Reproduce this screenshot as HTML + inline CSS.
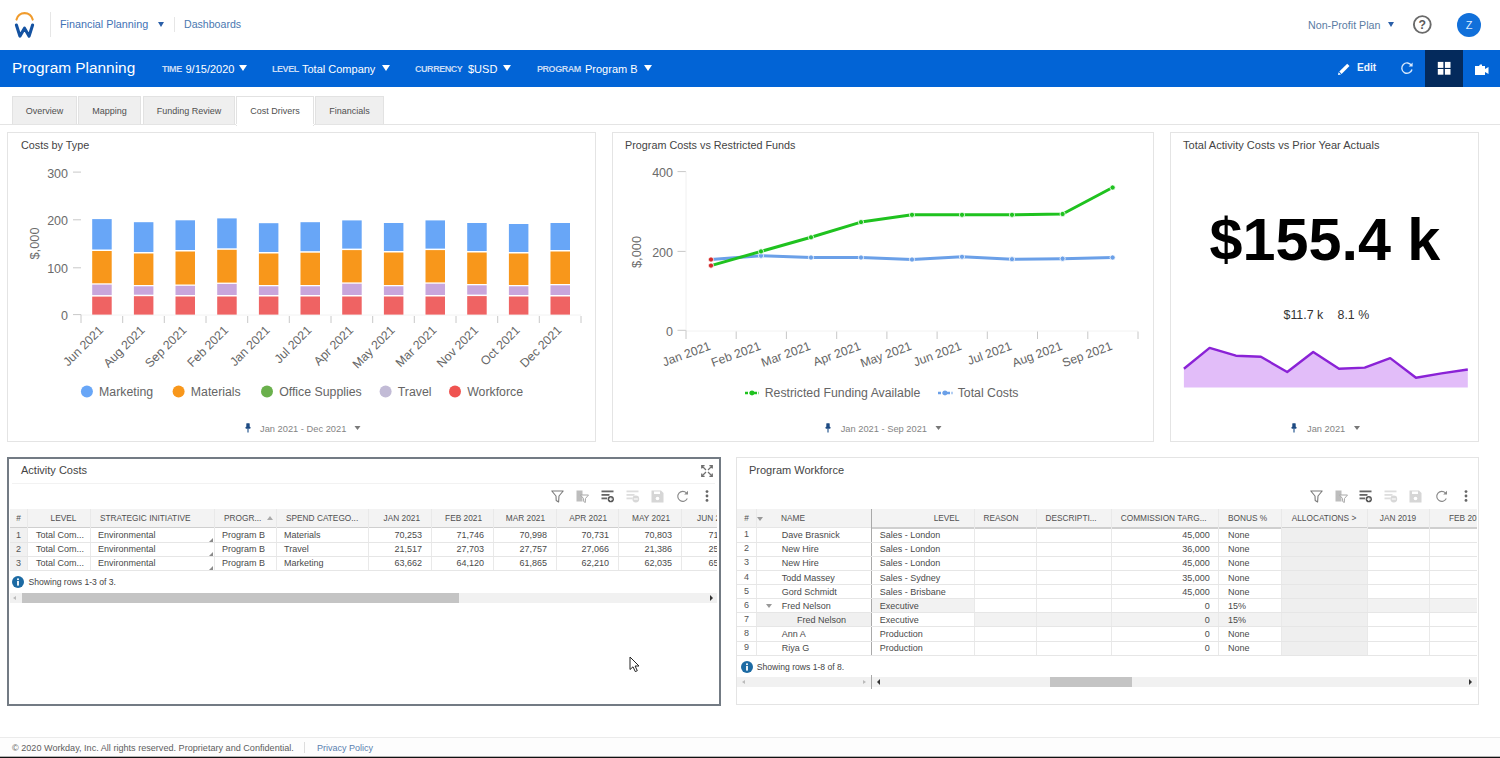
<!DOCTYPE html>
<html><head><meta charset="utf-8">
<style>
*{box-sizing:border-box;margin:0;padding:0}
html,body{width:1500px;height:758px;overflow:hidden;background:#fff;font-family:"Liberation Sans",sans-serif;color:#333}
.a{position:absolute;white-space:nowrap}
#top{position:absolute;left:0;top:0;width:1500px;height:49px;background:#fff}
#bar{position:absolute;left:0;top:50px;width:1500px;height:37px;background:#0264d6}
.lbl{font-size:9px;font-weight:bold;color:#c9dbf4;letter-spacing:-0.45px}
.val{font-size:11px;color:#fff}
.tri{width:0;height:0;border-left:4px solid transparent;border-right:4px solid transparent;border-top:6px solid #fff}
.tab{position:absolute;top:96px;height:29px;background:#efefef;border:1px solid #e2e2e2;border-bottom:none;font-size:9px;color:#505050;text-align:center;line-height:28px}
.panel{position:absolute;border:1px solid #e4e4e4;background:#fff}
.ptitle{position:absolute;font-size:10.8px;color:#444;white-space:nowrap}
</style></head><body>
<div id="top">
  <!-- logo -->
  <svg class="a" style="left:0;top:0" width="46" height="46" viewBox="0 0 46 46">
    <path d="M16.5 19.6 A8.3 8.3 0 0 1 32.7 19.6" fill="none" stroke="#f09b2c" stroke-width="2.1" stroke-linecap="round"/>
    <path d="M16.4 25 L19.9 36.1 L24.5 28.2 L29.1 36.1 L32.6 25" fill="none" stroke="#1452a1" stroke-width="3.1" stroke-linecap="round" stroke-linejoin="round"/>
  </svg>
  <div class="a" style="left:50px;top:12px;width:1px;height:25px;background:#e6e6e6"></div>
  <div class="a" style="left:60px;top:17.8px;font-size:10.8px;color:#3f72b5">Financial Planning</div>
  <div class="a tri" style="left:158px;top:22px;border-top-color:#2a5fa8;border-left-width:3.5px;border-right-width:3.5px;border-top-width:5px"></div>
  <div class="a" style="left:174px;top:17px;width:1px;height:15px;background:#e6e6e6"></div>
  <div class="a" style="left:184px;top:17.8px;font-size:10.6px;color:#4b78b0">Dashboards</div>
  <div class="a" style="left:1308px;top:18.5px;font-size:10.7px;color:#5a7ca3">Non-Profit Plan</div>
  <div class="a tri" style="left:1388px;top:22px;border-top-color:#2a5fa8;border-left-width:3.5px;border-right-width:3.5px;border-top-width:5px"></div>
  <svg class="a" style="left:1405px;top:8px" width="35" height="34" viewBox="1405 8 35 34"><circle cx="1422.3" cy="24.5" r="8.4" fill="none" stroke="#6a6a6a" stroke-width="1.9"/><text x="1422.2" y="29" text-anchor="middle" font-size="12.3" font-weight="bold" fill="#5a5a5a" font-family="Liberation Sans, sans-serif">?</text></svg>
  <div class="a" style="left:1457px;top:12.5px;width:24px;height:24px;background:#1170da;border-radius:50%;font-size:11px;color:#dfeeff;text-align:center;line-height:24px">Z</div>
</div>
<div id="bar">
  <div class="a" style="left:12px;top:9px;font-size:15.4px;color:#fff">Program Planning</div>
  <div class="a lbl" style="left:162px;top:13.5px">TIME</div>
  <div class="a val" style="left:185.5px;top:12.5px">9/15/2020</div>
  <div class="a tri" style="left:239px;top:15px"></div>
  <div class="a lbl" style="left:272px;top:13.5px">LEVEL</div>
  <div class="a val" style="left:302px;top:12.5px">Total Company</div>
  <div class="a tri" style="left:382px;top:15px"></div>
  <div class="a lbl" style="left:415px;top:13.5px">CURRENCY</div>
  <div class="a val" style="left:468px;top:12.5px">$USD</div>
  <div class="a tri" style="left:503px;top:15px"></div>
  <div class="a lbl" style="left:537px;top:13.5px">PROGRAM</div>
  <div class="a val" style="left:585px;top:12.5px">Program B</div>
  <div class="a tri" style="left:644px;top:15px"></div>
  <!-- edit -->
  <svg class="a" style="left:1337px;top:11.5px" width="14" height="14" viewBox="0 0 14 14"><path d="M1 13 L1.6 10.2 L4 12.4 Z" fill="#fff"/><path d="M2.3 9.6 L10.2 1.7 L12.5 4 L4.6 11.9 Z" fill="#fff"/></svg>
  <div class="a" style="left:1357px;top:12px;font-size:10.2px;font-weight:bold;color:#eef5ff">Edit</div>
  <svg class="a" style="left:1400px;top:11px" width="14" height="14" viewBox="0 0 14 14"><path d="M11.5 4.5 A5.2 5.2 0 1 0 12 8.5" fill="none" stroke="#d8e8fb" stroke-width="1.4"/><path d="M12.6 1.6 L12.6 5.6 L8.6 5.6 Z" fill="#d8e8fb"/></svg>
  <div class="a" style="left:1425px;top:0;width:38px;height:37px;background:#042a5c"></div>
  <svg class="a" style="left:1425px;top:0" width="38" height="37" viewBox="1425 50 38 37"><rect x="1437.8" y="61.9" width="5.6" height="6" fill="#fff"/><rect x="1444.9" y="61.9" width="5.6" height="6" fill="#fff"/><rect x="1437.8" y="69" width="5.6" height="5.7" fill="#fff"/><rect x="1444.9" y="69" width="5.6" height="5.7" fill="#fff"/></svg>
  <svg class="a" style="left:1474px;top:12.5px" width="16" height="14" viewBox="0 0 16 14"><path d="M1 3 L5 3 L6 1.5 L8 1.5 L8 3 L11 3 L11 6 L14.5 4 L14.5 11 L11 9 L11 12 L1 12 Z" fill="#fff"/></svg>
</div>
<!-- tabs -->
<div class="tab" style="left:12px;width:65px">Overview</div>
<div class="tab" style="left:78px;width:63px">Mapping</div>
<div class="tab" style="left:143px;width:92px">Funding Review</div>
<div class="tab" style="left:236px;width:78px;background:#fff;height:30px">Cost Drivers</div>
<div class="tab" style="left:315px;width:69px">Financials</div>
<div class="a" style="left:0;top:124px;width:1500px;height:1px;background:#e4e4e4"></div>
<div class="a" style="left:236px;top:124px;width:78px;height:1px;background:#fff"></div>

<!-- panels -->
<div class="panel" style="left:7px;top:132px;width:589px;height:310px"></div>
<div class="panel" style="left:612px;top:132px;width:542px;height:310px"></div>
<div class="panel" style="left:1170px;top:132px;width:309px;height:310px"></div>
<div class="panel" style="left:7px;top:457px;width:714px;height:249px;border:2px solid #737b84"></div>
<div class="panel" style="left:736px;top:457px;width:743px;height:248px"></div>

<div class="ptitle" style="left:21px;top:139px">Costs by Type</div>
<div class="ptitle" style="left:625px;top:139px">Program Costs vs Restricted Funds</div>
<div class="ptitle" style="left:1183px;top:139px;font-size:11.05px">Total Activity Costs vs Prior Year Actuals</div>
<div class="ptitle" style="left:21px;top:464px;font-size:11px">Activity Costs</div>
<div class="ptitle" style="left:749px;top:464px;font-size:11px">Program Workforce</div>

<!-- CHARTS -->
<div id="charts"><svg class="a" style="left:0;top:0" width="600" height="445" viewBox="0 0 600 445">
<text x="68" y="177.6" text-anchor="end" font-size="12.5" fill="#6b6b6b" font-family="Liberation Sans, sans-serif">300</text>
<line x1="73" y1="172.1" x2="81" y2="172.1" stroke="#c8c8c8" stroke-width="1"/>
<text x="68" y="225.3" text-anchor="end" font-size="12.5" fill="#6b6b6b" font-family="Liberation Sans, sans-serif">200</text>
<line x1="73" y1="219.8" x2="81" y2="219.8" stroke="#c8c8c8" stroke-width="1"/>
<text x="68" y="273.3" text-anchor="end" font-size="12.5" fill="#6b6b6b" font-family="Liberation Sans, sans-serif">100</text>
<line x1="73" y1="267.8" x2="81" y2="267.8" stroke="#c8c8c8" stroke-width="1"/>
<text x="68" y="320.1" text-anchor="end" font-size="12.5" fill="#6b6b6b" font-family="Liberation Sans, sans-serif">0</text>
<line x1="73" y1="314.6" x2="81" y2="314.6" stroke="#c8c8c8" stroke-width="1"/>
<text transform="translate(38.6,243.5) rotate(-90)" text-anchor="middle" font-size="12.8" fill="#6b6b6b" font-family="Liberation Sans, sans-serif">$,000</text>
<line x1="81" y1="315" x2="581" y2="315" stroke="#f2f2f2" stroke-width="1"/>
<line x1="81.0" y1="314.6" x2="81.0" y2="323" stroke="#c8c8c8" stroke-width="1"/>
<line x1="122.7" y1="316" x2="122.7" y2="323" stroke="#c8c8c8" stroke-width="1"/>
<line x1="164.3" y1="316" x2="164.3" y2="323" stroke="#c8c8c8" stroke-width="1"/>
<line x1="206.0" y1="316" x2="206.0" y2="323" stroke="#c8c8c8" stroke-width="1"/>
<line x1="247.7" y1="316" x2="247.7" y2="323" stroke="#c8c8c8" stroke-width="1"/>
<line x1="289.3" y1="316" x2="289.3" y2="323" stroke="#c8c8c8" stroke-width="1"/>
<line x1="331.0" y1="316" x2="331.0" y2="323" stroke="#c8c8c8" stroke-width="1"/>
<line x1="372.7" y1="316" x2="372.7" y2="323" stroke="#c8c8c8" stroke-width="1"/>
<line x1="414.3" y1="316" x2="414.3" y2="323" stroke="#c8c8c8" stroke-width="1"/>
<line x1="456.0" y1="316" x2="456.0" y2="323" stroke="#c8c8c8" stroke-width="1"/>
<line x1="497.7" y1="316" x2="497.7" y2="323" stroke="#c8c8c8" stroke-width="1"/>
<line x1="539.3" y1="316" x2="539.3" y2="323" stroke="#c8c8c8" stroke-width="1"/>
<line x1="581.0" y1="316" x2="581.0" y2="323" stroke="#c8c8c8" stroke-width="1"/>
<rect x="92.2" y="219.1" width="19.5" height="30.4" fill="#68a6f7"/>
<rect x="92.2" y="251.0" width="19.5" height="32.3" fill="#f8971b"/>
<rect x="92.2" y="284.6" width="19.5" height="10.5" fill="#c8a6dc"/>
<rect x="92.2" y="296.6" width="19.5" height="18.0" fill="#ef6363"/>
<text transform="translate(104.0,331) rotate(-45)" text-anchor="end" font-size="12.3" fill="#666" font-family="Liberation Sans, sans-serif">Jun 2021</text>
<rect x="133.9" y="222.2" width="19.5" height="29.8" fill="#68a6f7"/>
<rect x="133.9" y="253.5" width="19.5" height="31.5" fill="#f8971b"/>
<rect x="133.9" y="286.3" width="19.5" height="8.4" fill="#c8a6dc"/>
<rect x="133.9" y="296.2" width="19.5" height="18.4" fill="#ef6363"/>
<text transform="translate(145.7,331) rotate(-45)" text-anchor="end" font-size="12.3" fill="#666" font-family="Liberation Sans, sans-serif">Aug 2021</text>
<rect x="175.5" y="220.3" width="19.5" height="29.7" fill="#68a6f7"/>
<rect x="175.5" y="251.5" width="19.5" height="33.0" fill="#f8971b"/>
<rect x="175.5" y="285.8" width="19.5" height="9.2" fill="#c8a6dc"/>
<rect x="175.5" y="296.5" width="19.5" height="18.1" fill="#ef6363"/>
<text transform="translate(187.3,331) rotate(-45)" text-anchor="end" font-size="12.3" fill="#666" font-family="Liberation Sans, sans-serif">Sep 2021</text>
<rect x="217.2" y="218.4" width="19.5" height="29.9" fill="#68a6f7"/>
<rect x="217.2" y="249.8" width="19.5" height="32.8" fill="#f8971b"/>
<rect x="217.2" y="283.90000000000003" width="19.5" height="11.1" fill="#c8a6dc"/>
<rect x="217.2" y="296.5" width="19.5" height="18.1" fill="#ef6363"/>
<text transform="translate(229.0,331) rotate(-45)" text-anchor="end" font-size="12.3" fill="#666" font-family="Liberation Sans, sans-serif">Feb 2021</text>
<rect x="258.9" y="223.2" width="19.5" height="28.8" fill="#68a6f7"/>
<rect x="258.9" y="253.5" width="19.5" height="31.5" fill="#f8971b"/>
<rect x="258.9" y="286.3" width="19.5" height="8.7" fill="#c8a6dc"/>
<rect x="258.9" y="296.5" width="19.5" height="18.1" fill="#ef6363"/>
<text transform="translate(270.7,331) rotate(-45)" text-anchor="end" font-size="12.3" fill="#666" font-family="Liberation Sans, sans-serif">Jan 2021</text>
<rect x="300.5" y="222.2" width="19.5" height="29.0" fill="#68a6f7"/>
<rect x="300.5" y="252.7" width="19.5" height="32.3" fill="#f8971b"/>
<rect x="300.5" y="286.3" width="19.5" height="8.7" fill="#c8a6dc"/>
<rect x="300.5" y="296.5" width="19.5" height="18.1" fill="#ef6363"/>
<text transform="translate(312.3,331) rotate(-45)" text-anchor="end" font-size="12.3" fill="#666" font-family="Liberation Sans, sans-serif">Jul 2021</text>
<rect x="342.2" y="220.4" width="19.5" height="28.2" fill="#68a6f7"/>
<rect x="342.2" y="250.1" width="19.5" height="32.3" fill="#f8971b"/>
<rect x="342.2" y="283.7" width="19.5" height="11.3" fill="#c8a6dc"/>
<rect x="342.2" y="296.5" width="19.5" height="18.1" fill="#ef6363"/>
<text transform="translate(354.0,331) rotate(-45)" text-anchor="end" font-size="12.3" fill="#666" font-family="Liberation Sans, sans-serif">Apr 2021</text>
<rect x="383.9" y="223" width="19.5" height="28.0" fill="#68a6f7"/>
<rect x="383.9" y="252.5" width="19.5" height="32.5" fill="#f8971b"/>
<rect x="383.9" y="286.3" width="19.5" height="8.7" fill="#c8a6dc"/>
<rect x="383.9" y="296.5" width="19.5" height="18.1" fill="#ef6363"/>
<text transform="translate(395.7,331) rotate(-45)" text-anchor="end" font-size="12.3" fill="#666" font-family="Liberation Sans, sans-serif">May 2021</text>
<rect x="425.5" y="220.4" width="19.5" height="28.2" fill="#68a6f7"/>
<rect x="425.5" y="250.1" width="19.5" height="32.3" fill="#f8971b"/>
<rect x="425.5" y="283.7" width="19.5" height="11.3" fill="#c8a6dc"/>
<rect x="425.5" y="296.5" width="19.5" height="18.1" fill="#ef6363"/>
<text transform="translate(437.3,331) rotate(-45)" text-anchor="end" font-size="12.3" fill="#666" font-family="Liberation Sans, sans-serif">Mar 2021</text>
<rect x="467.2" y="223" width="19.5" height="28.0" fill="#68a6f7"/>
<rect x="467.2" y="252.5" width="19.5" height="31.5" fill="#f8971b"/>
<rect x="467.2" y="285.3" width="19.5" height="9.3" fill="#c8a6dc"/>
<rect x="467.2" y="296.1" width="19.5" height="18.5" fill="#ef6363"/>
<text transform="translate(479.0,331) rotate(-45)" text-anchor="end" font-size="12.3" fill="#666" font-family="Liberation Sans, sans-serif">Nov 2021</text>
<rect x="508.9" y="224" width="19.5" height="28.0" fill="#68a6f7"/>
<rect x="508.9" y="253.5" width="19.5" height="31.5" fill="#f8971b"/>
<rect x="508.9" y="286.3" width="19.5" height="8.7" fill="#c8a6dc"/>
<rect x="508.9" y="296.5" width="19.5" height="18.1" fill="#ef6363"/>
<text transform="translate(520.7,331) rotate(-45)" text-anchor="end" font-size="12.3" fill="#666" font-family="Liberation Sans, sans-serif">Oct 2021</text>
<rect x="550.5" y="223" width="19.5" height="27.0" fill="#68a6f7"/>
<rect x="550.5" y="251.5" width="19.5" height="32.5" fill="#f8971b"/>
<rect x="550.5" y="285.3" width="19.5" height="9.7" fill="#c8a6dc"/>
<rect x="550.5" y="296.5" width="19.5" height="18.1" fill="#ef6363"/>
<text transform="translate(562.3,331) rotate(-45)" text-anchor="end" font-size="12.3" fill="#666" font-family="Liberation Sans, sans-serif">Dec 2021</text>
<circle cx="86.9" cy="391.6" r="6" fill="#68a6f7"/>
<text x="99.1" y="396" font-size="12.3" fill="#656565" font-family="Liberation Sans, sans-serif">Marketing</text>
<circle cx="178.6" cy="391.6" r="6" fill="#f8971b"/>
<text x="190.8" y="396" font-size="12.3" fill="#656565" font-family="Liberation Sans, sans-serif">Materials</text>
<circle cx="267" cy="391.6" r="6" fill="#6ab04c"/>
<text x="279.2" y="396" font-size="12.3" fill="#656565" font-family="Liberation Sans, sans-serif">Office Supplies</text>
<circle cx="385.6" cy="391.6" r="6" fill="#c2bbd6"/>
<text x="397.8" y="396" font-size="12.3" fill="#656565" font-family="Liberation Sans, sans-serif">Travel</text>
<circle cx="455" cy="391.6" r="6" fill="#ef5350"/>
<text x="467.2" y="396" font-size="12.3" fill="#656565" font-family="Liberation Sans, sans-serif">Workforce</text>
<g transform="translate(248,428)"><rect x="-1.7" y="-4.8" width="3.4" height="4.4" rx="0.6" fill="#1d4a82"/><rect x="-2.6" y="-1.2" width="5.2" height="2" rx="1" fill="#1d4a82"/><line x1="0" y1="0.5" x2="0" y2="4.5" stroke="#2a5a92" stroke-width="1.2"/></g>
<text x="260" y="431.6" font-size="9.3" fill="#848484" font-family="Liberation Sans, sans-serif">Jan 2021 - Dec 2021</text>
<path d="M354.5 426 L360.5 426 L357.5 430 Z" fill="#7a7a7a"/>
</svg>
<svg class="a" style="left:600px;top:0" width="560" height="445" viewBox="600 0 560 445">
<text x="673" y="177.1" text-anchor="end" font-size="12.5" fill="#6b6b6b" font-family="Liberation Sans, sans-serif">400</text>
<line x1="677.5" y1="171.6" x2="686" y2="171.6" stroke="#c8c8c8" stroke-width="1"/>
<text x="673" y="256.9" text-anchor="end" font-size="12.5" fill="#6b6b6b" font-family="Liberation Sans, sans-serif">200</text>
<line x1="677.5" y1="251.4" x2="686" y2="251.4" stroke="#c8c8c8" stroke-width="1"/>
<text x="673" y="335.8" text-anchor="end" font-size="12.5" fill="#6b6b6b" font-family="Liberation Sans, sans-serif">0</text>
<line x1="677.5" y1="330.3" x2="686" y2="330.3" stroke="#c8c8c8" stroke-width="1"/>
<line x1="686" y1="171.6" x2="686" y2="330.3" stroke="#f0f0f0" stroke-width="1"/>
<text transform="translate(641.2,252) rotate(-90)" text-anchor="middle" font-size="12.8" fill="#6b6b6b" font-family="Liberation Sans, sans-serif">$,000</text>
<line x1="686" y1="331" x2="1138" y2="331" stroke="#f2f2f2" stroke-width="1"/>
<line x1="686.0" y1="330.3" x2="686.0" y2="339" stroke="#c8c8c8" stroke-width="1"/>
<line x1="736.2" y1="331.5" x2="736.2" y2="339" stroke="#c8c8c8" stroke-width="1"/>
<line x1="786.4" y1="331.5" x2="786.4" y2="339" stroke="#c8c8c8" stroke-width="1"/>
<line x1="836.7" y1="331.5" x2="836.7" y2="339" stroke="#c8c8c8" stroke-width="1"/>
<line x1="886.9" y1="331.5" x2="886.9" y2="339" stroke="#c8c8c8" stroke-width="1"/>
<line x1="937.1" y1="331.5" x2="937.1" y2="339" stroke="#c8c8c8" stroke-width="1"/>
<line x1="987.3" y1="331.5" x2="987.3" y2="339" stroke="#c8c8c8" stroke-width="1"/>
<line x1="1037.5" y1="331.5" x2="1037.5" y2="339" stroke="#c8c8c8" stroke-width="1"/>
<line x1="1087.8" y1="331.5" x2="1087.8" y2="339" stroke="#c8c8c8" stroke-width="1"/>
<line x1="1138.0" y1="331.5" x2="1138.0" y2="339" stroke="#c8c8c8" stroke-width="1"/>
<polyline points="711,259.5 761,255.8 811,257.5 861,257.5 912,259.5 962,256.8 1012,259.2 1062.6,258.7 1112.6,257.5" fill="none" stroke="#6ba0e8" stroke-width="3" stroke-linejoin="round"/>
<polyline points="711,265.6 761,251.4 811,237.3 861,222.1 912,214.8 962,214.8 1012,214.8 1062.6,214 1112.6,187.5" fill="none" stroke="#1fc21f" stroke-width="3" stroke-linejoin="round"/>
<circle cx="711" cy="259.5" r="2.6" fill="#d42a2a" stroke="#fff" stroke-width="0.8"/>
<circle cx="761" cy="255.8" r="2.6" fill="#6ba0e8" stroke="#fff" stroke-width="0.8"/>
<circle cx="811" cy="257.5" r="2.6" fill="#6ba0e8" stroke="#fff" stroke-width="0.8"/>
<circle cx="861" cy="257.5" r="2.6" fill="#6ba0e8" stroke="#fff" stroke-width="0.8"/>
<circle cx="912" cy="259.5" r="2.6" fill="#6ba0e8" stroke="#fff" stroke-width="0.8"/>
<circle cx="962" cy="256.8" r="2.6" fill="#6ba0e8" stroke="#fff" stroke-width="0.8"/>
<circle cx="1012" cy="259.2" r="2.6" fill="#6ba0e8" stroke="#fff" stroke-width="0.8"/>
<circle cx="1062.6" cy="258.7" r="2.6" fill="#6ba0e8" stroke="#fff" stroke-width="0.8"/>
<circle cx="1112.6" cy="257.5" r="2.6" fill="#6ba0e8" stroke="#fff" stroke-width="0.8"/>
<circle cx="711" cy="265.6" r="2.6" fill="#d42a2a" stroke="#fff" stroke-width="0.8"/>
<circle cx="761" cy="251.4" r="2.6" fill="#1fc21f" stroke="#fff" stroke-width="0.8"/>
<circle cx="811" cy="237.3" r="2.6" fill="#1fc21f" stroke="#fff" stroke-width="0.8"/>
<circle cx="861" cy="222.1" r="2.6" fill="#1fc21f" stroke="#fff" stroke-width="0.8"/>
<circle cx="912" cy="214.8" r="2.6" fill="#1fc21f" stroke="#fff" stroke-width="0.8"/>
<circle cx="962" cy="214.8" r="2.6" fill="#1fc21f" stroke="#fff" stroke-width="0.8"/>
<circle cx="1012" cy="214.8" r="2.6" fill="#1fc21f" stroke="#fff" stroke-width="0.8"/>
<circle cx="1062.6" cy="214" r="2.6" fill="#1fc21f" stroke="#fff" stroke-width="0.8"/>
<circle cx="1112.6" cy="187.5" r="2.6" fill="#1fc21f" stroke="#fff" stroke-width="0.8"/>
<text transform="translate(711.5,349.3) rotate(-20)" text-anchor="end" font-size="12.2" fill="#666" font-family="Liberation Sans, sans-serif">Jan 2021</text>
<text transform="translate(761.5,349.3) rotate(-20)" text-anchor="end" font-size="12.2" fill="#666" font-family="Liberation Sans, sans-serif">Feb 2021</text>
<text transform="translate(811.5,349.3) rotate(-20)" text-anchor="end" font-size="12.2" fill="#666" font-family="Liberation Sans, sans-serif">Mar 2021</text>
<text transform="translate(861.5,349.3) rotate(-20)" text-anchor="end" font-size="12.2" fill="#666" font-family="Liberation Sans, sans-serif">Apr 2021</text>
<text transform="translate(912.5,349.3) rotate(-20)" text-anchor="end" font-size="12.2" fill="#666" font-family="Liberation Sans, sans-serif">May 2021</text>
<text transform="translate(962.5,349.3) rotate(-20)" text-anchor="end" font-size="12.2" fill="#666" font-family="Liberation Sans, sans-serif">Jun 2021</text>
<text transform="translate(1012.5,349.3) rotate(-20)" text-anchor="end" font-size="12.2" fill="#666" font-family="Liberation Sans, sans-serif">Jul 2021</text>
<text transform="translate(1063.1,349.3) rotate(-20)" text-anchor="end" font-size="12.2" fill="#666" font-family="Liberation Sans, sans-serif">Aug 2021</text>
<text transform="translate(1113.1,349.3) rotate(-20)" text-anchor="end" font-size="12.2" fill="#666" font-family="Liberation Sans, sans-serif">Sep 2021</text>
<line x1="745" y1="393" x2="759" y2="393" stroke="#1fc21f" stroke-width="2.5" stroke-dasharray="3,1.5"/><circle cx="752" cy="393" r="2.4" fill="#1fc21f"/>
<text x="764.7" y="397.3" font-size="12.3" fill="#656565" font-family="Liberation Sans, sans-serif">Restricted Funding Available</text>
<line x1="938" y1="393" x2="952.5" y2="393" stroke="#6ba0e8" stroke-width="2.5" stroke-dasharray="3,1.5"/><circle cx="945" cy="393" r="2.4" fill="#6ba0e8"/>
<text x="957.7" y="397.3" font-size="12.3" fill="#656565" font-family="Liberation Sans, sans-serif">Total Costs</text>
<g transform="translate(828,428)"><rect x="-1.7" y="-4.8" width="3.4" height="4.4" rx="0.6" fill="#1d4a82"/><rect x="-2.6" y="-1.2" width="5.2" height="2" rx="1" fill="#1d4a82"/><line x1="0" y1="0.5" x2="0" y2="4.5" stroke="#2a5a92" stroke-width="1.2"/></g>
<text x="840.7" y="431.6" font-size="9.3" fill="#848484" font-family="Liberation Sans, sans-serif">Jan 2021 - Sep 2021</text>
<path d="M935.5 426 L941.5 426 L938.5 430 Z" fill="#777"/>
</svg>
<svg class="a" style="left:1160px;top:0" width="340" height="445" viewBox="1160 0 340 445">
<text x="1209.5" y="259.5" font-size="59.3" font-weight="bold" fill="#000" font-family="Liberation Sans, sans-serif">$155.4 k</text>
<text x="1283.5" y="318.5" font-size="12.4" fill="#333" font-family="Liberation Sans, sans-serif">$11.7 k</text>
<text x="1337.5" y="318.5" font-size="12.4" fill="#333" font-family="Liberation Sans, sans-serif">8.1 %</text>
<polygon points="1183.9,387.5 1183.9,368.7 1209.6,347.9 1235.9,355.7 1260.9,356.8 1287.2,372 1313.2,352 1339,368.7 1364.7,367.6 1390.2,358.1 1416,377.8 1441.5,373.4 1467.8,369.5 1467.8,387.5" fill="#e2bdf9"/>
<polyline points="1183.9,368.7 1209.6,347.9 1235.9,355.7 1260.9,356.8 1287.2,372 1313.2,352 1339,368.7 1364.7,367.6 1390.2,358.1 1416,377.8 1441.5,373.4 1467.8,369.5" fill="none" stroke="#8a22d6" stroke-width="2.4" stroke-linejoin="round"/>
<g transform="translate(1294,428)"><rect x="-1.7" y="-4.8" width="3.4" height="4.4" rx="0.6" fill="#1d4a82"/><rect x="-2.6" y="-1.2" width="5.2" height="2" rx="1" fill="#1d4a82"/><line x1="0" y1="0.5" x2="0" y2="4.5" stroke="#2a5a92" stroke-width="1.2"/></g>
<text x="1307" y="431.6" font-size="9.3" fill="#848484" font-family="Liberation Sans, sans-serif">Jan 2021</text>
<path d="M1354 426 L1360 426 L1357 430 Z" fill="#777"/>
</svg></div><!--/charts-->
<!-- TABLES -->
<div id="tables"><div class="a" style="left:0;top:0;width:717px;height:758px;overflow:hidden">
<div class="a" style="left:12px;top:483px;width:703px;height:1px;background:#f2f2f2"></div>
<svg class="a" style="left:701px;top:465px" width="12" height="12" viewBox="0 0 12 12"><path d="M0.7 3.6 V0.7 H3.6 M8.4 0.7 H11.3 V3.6 M11.3 8.4 V11.3 H8.4 M3.6 11.3 H0.7 V8.4 M1 1 L5 5 M11 1 L7 5 M11 11 L7 7 M1 11 L5 7" fill="none" stroke="#6f6f6f" stroke-width="1.2"/></svg>
<svg class="a" style="left:550.5px;top:490px" width="13" height="13" viewBox="0 0 13 13"><path d="M0.8 1 L12.2 1 L8 6 L7.6 12 L5.2 10.5 L5 6 Z" fill="none" stroke="#7a7a7a" stroke-width="1.1" stroke-linejoin="round"/></svg>
<svg class="a" style="left:575.5px;top:490px" width="13" height="13" viewBox="0 0 13 13"><rect x="0.5" y="0.5" width="6" height="11" fill="#bdbdbd"/><path d="M4.5 5 L12.5 5 L9.5 8.5 L9.3 12.5 L7.7 11.5 L7.5 8.5 Z" fill="#fff" stroke="#a8a8a8" stroke-width="1"/></svg>
<svg class="a" style="left:600.5px;top:490px" width="14" height="13" viewBox="0 0 14 13"><rect x="0.5" y="0.5" width="12" height="1.8" fill="#666"/><rect x="0.5" y="4" width="8" height="1.8" fill="#666"/><rect x="0.5" y="7.5" width="6" height="1.8" fill="#666"/><circle cx="9.8" cy="9.2" r="3.6" fill="#fff"/><circle cx="9.8" cy="9.2" r="3.1" fill="#555"/><path d="M9.8 7.4 V11 M8 9.2 H11.6" stroke="#fff" stroke-width="1.2"/></svg>
<svg class="a" style="left:625.5px;top:490px" width="14" height="13" viewBox="0 0 14 13"><rect x="0.5" y="0.5" width="12" height="1.8" fill="#ddd"/><rect x="0.5" y="4" width="8" height="1.8" fill="#ddd"/><rect x="0.5" y="7.5" width="6" height="1.8" fill="#ddd"/><circle cx="9.8" cy="9" r="3.4" fill="#d8d8d8"/><path d="M7.8 9 H11.8" stroke="#fff" stroke-width="1.1"/></svg>
<svg class="a" style="left:651px;top:490px" width="13" height="13" viewBox="0 0 13 13"><path d="M0.5 0.5 H10 L12.5 3 V12.5 H0.5 Z" fill="#d6d6d6"/><rect x="3" y="1.5" width="6" height="2.5" fill="#fff"/><circle cx="6.5" cy="8.5" r="1.8" fill="#fff"/></svg>
<svg class="a" style="left:676px;top:490px" width="13" height="13" viewBox="0 0 13 13"><path d="M10.5 3 A5 5 0 1 0 11.3 8.5" fill="none" stroke="#8a8a8a" stroke-width="1.1"/><path d="M12 0.8 L12 4.6 L8.2 4.6 Z" fill="#8a8a8a"/></svg>
<svg class="a" style="left:705px;top:490px" width="4" height="12" viewBox="0 0 4 12"><circle cx="2" cy="1.6" r="1.4" fill="#666"/><circle cx="2" cy="6" r="1.4" fill="#666"/><circle cx="2" cy="10.4" r="1.4" fill="#666"/></svg>
<div class="a" style="left:10px;top:509px;width:707px;height:19px;background:#f3f3f3;border-bottom:1.5px solid #cfcfcf"></div>
<div class="a" style="left:27px;top:509px;width:1px;height:61px;background:#e9e9e9"></div>
<div class="a" style="left:90px;top:509px;width:1px;height:61px;background:#e9e9e9"></div>
<div class="a" style="left:214px;top:509px;width:1px;height:61px;background:#e9e9e9"></div>
<div class="a" style="left:276px;top:509px;width:1px;height:61px;background:#e9e9e9"></div>
<div class="a" style="left:368px;top:509px;width:1px;height:61px;background:#e9e9e9"></div>
<div class="a" style="left:431px;top:509px;width:1px;height:61px;background:#e9e9e9"></div>
<div class="a" style="left:493px;top:509px;width:1px;height:61px;background:#e9e9e9"></div>
<div class="a" style="left:556px;top:509px;width:1px;height:61px;background:#e9e9e9"></div>
<div class="a" style="left:618px;top:509px;width:1px;height:61px;background:#e9e9e9"></div>
<div class="a" style="left:681px;top:509px;width:1px;height:61px;background:#e9e9e9"></div>
<div class="a" style="left:10px;top:528px;width:17px;height:42px;background:#f1f1f1"></div>
<div class="a" style="left:27px;top:509px;width:1px;height:61px;background:#e9e9e9"></div>
<div class="a" style="left:10px;top:509px;width:17px;text-align:center;font-size:8.3px;color:#505050;line-height:19px">#</div>
<div class="a" style="left:32px;top:509px;width:63px;text-align:center;font-size:8.3px;color:#505050;line-height:19px">LEVEL</div>
<div class="a" style="left:100px;top:509px;font-size:8.3px;color:#505050;line-height:19px">STRATEGIC INITIATIVE</div>
<div class="a" style="left:224px;top:509px;font-size:8.3px;color:#505050;line-height:19px">PROGR...</div>
<div class="a" style="left:286px;top:509px;font-size:8.3px;color:#505050;line-height:19px">SPEND CATEGO...</div>
<div class="a" style="left:368px;top:509px;width:52px;text-align:right;font-size:8.3px;color:#505050;line-height:19px">JAN 2021</div>
<div class="a" style="left:431px;top:509px;width:51px;text-align:right;font-size:8.3px;color:#505050;line-height:19px">FEB 2021</div>
<div class="a" style="left:493px;top:509px;width:52px;text-align:right;font-size:8.3px;color:#505050;line-height:19px">MAR 2021</div>
<div class="a" style="left:556px;top:509px;width:51px;text-align:right;font-size:8.3px;color:#505050;line-height:19px">APR 2021</div>
<div class="a" style="left:618px;top:509px;width:52px;text-align:right;font-size:8.3px;color:#505050;line-height:19px">MAY 2021</div>
<div class="a" style="left:681px;top:509px;width:53px;text-align:right;font-size:8.3px;color:#505050;line-height:19px">JUN 2021</div>
<div class="a" style="left:267px;top:516px;width:0;height:0;border-left:3.5px solid transparent;border-right:3.5px solid transparent;border-bottom:4px solid #aaa"></div>
<div class="a" style="left:10px;top:541.9px;width:707px;height:1px;background:#e6e6e6"></div>
<div class="a" style="left:10px;top:527.5px;width:17px;text-align:center;font-size:9px;color:#4a4a4a;line-height:14px;color:#555">1</div>
<div class="a" style="left:36px;top:527.7px;font-size:9px;color:#4a4a4a;line-height:14px">Total Com...</div>
<div class="a" style="left:98px;top:527.7px;font-size:9px;color:#4a4a4a;line-height:14px">Environmental</div>
<div class="a" style="left:222px;top:527.7px;font-size:9px;color:#4a4a4a;line-height:14px">Program B</div>
<div class="a" style="left:284px;top:527.7px;font-size:9px;color:#4a4a4a;line-height:14px">Materials</div>
<div class="a" style="left:368px;top:527.7px;width:54px;text-align:right;font-size:9px;color:#4a4a4a;line-height:14px">70,253</div>
<div class="a" style="left:431px;top:527.7px;width:53px;text-align:right;font-size:9px;color:#4a4a4a;line-height:14px">71,746</div>
<div class="a" style="left:493px;top:527.7px;width:54px;text-align:right;font-size:9px;color:#4a4a4a;line-height:14px">70,998</div>
<div class="a" style="left:556px;top:527.7px;width:53px;text-align:right;font-size:9px;color:#4a4a4a;line-height:14px">70,731</div>
<div class="a" style="left:618px;top:527.7px;width:54px;text-align:right;font-size:9px;color:#4a4a4a;line-height:14px">70,803</div>
<div class="a" style="left:681px;top:527.7px;width:55px;text-align:right;font-size:9px;color:#4a4a4a;line-height:14px">71,000</div>
<div class="a" style="left:209px;top:537.5px;width:0;height:0;border-left:4px solid transparent;border-bottom:4px solid #8a8a8a"></div>
<div class="a" style="left:10px;top:555.9px;width:707px;height:1px;background:#e6e6e6"></div>
<div class="a" style="left:10px;top:541.5px;width:17px;text-align:center;font-size:9px;color:#4a4a4a;line-height:14px;color:#555">2</div>
<div class="a" style="left:36px;top:541.7px;font-size:9px;color:#4a4a4a;line-height:14px">Total Com...</div>
<div class="a" style="left:98px;top:541.7px;font-size:9px;color:#4a4a4a;line-height:14px">Environmental</div>
<div class="a" style="left:222px;top:541.7px;font-size:9px;color:#4a4a4a;line-height:14px">Program B</div>
<div class="a" style="left:284px;top:541.7px;font-size:9px;color:#4a4a4a;line-height:14px">Travel</div>
<div class="a" style="left:368px;top:541.7px;width:54px;text-align:right;font-size:9px;color:#4a4a4a;line-height:14px">21,517</div>
<div class="a" style="left:431px;top:541.7px;width:53px;text-align:right;font-size:9px;color:#4a4a4a;line-height:14px">27,703</div>
<div class="a" style="left:493px;top:541.7px;width:54px;text-align:right;font-size:9px;color:#4a4a4a;line-height:14px">27,757</div>
<div class="a" style="left:556px;top:541.7px;width:53px;text-align:right;font-size:9px;color:#4a4a4a;line-height:14px">27,066</div>
<div class="a" style="left:618px;top:541.7px;width:54px;text-align:right;font-size:9px;color:#4a4a4a;line-height:14px">21,386</div>
<div class="a" style="left:681px;top:541.7px;width:55px;text-align:right;font-size:9px;color:#4a4a4a;line-height:14px">25,000</div>
<div class="a" style="left:209px;top:551.5px;width:0;height:0;border-left:4px solid transparent;border-bottom:4px solid #8a8a8a"></div>
<div class="a" style="left:10px;top:569.9px;width:707px;height:1px;background:#e6e6e6"></div>
<div class="a" style="left:10px;top:555.5px;width:17px;text-align:center;font-size:9px;color:#4a4a4a;line-height:14px;color:#555">3</div>
<div class="a" style="left:36px;top:555.7px;font-size:9px;color:#4a4a4a;line-height:14px">Total Com...</div>
<div class="a" style="left:98px;top:555.7px;font-size:9px;color:#4a4a4a;line-height:14px">Environmental</div>
<div class="a" style="left:222px;top:555.7px;font-size:9px;color:#4a4a4a;line-height:14px">Program B</div>
<div class="a" style="left:284px;top:555.7px;font-size:9px;color:#4a4a4a;line-height:14px">Marketing</div>
<div class="a" style="left:368px;top:555.7px;width:54px;text-align:right;font-size:9px;color:#4a4a4a;line-height:14px">63,662</div>
<div class="a" style="left:431px;top:555.7px;width:53px;text-align:right;font-size:9px;color:#4a4a4a;line-height:14px">64,120</div>
<div class="a" style="left:493px;top:555.7px;width:54px;text-align:right;font-size:9px;color:#4a4a4a;line-height:14px">61,865</div>
<div class="a" style="left:556px;top:555.7px;width:53px;text-align:right;font-size:9px;color:#4a4a4a;line-height:14px">62,210</div>
<div class="a" style="left:618px;top:555.7px;width:54px;text-align:right;font-size:9px;color:#4a4a4a;line-height:14px">62,035</div>
<div class="a" style="left:681px;top:555.7px;width:55px;text-align:right;font-size:9px;color:#4a4a4a;line-height:14px">65,000</div>
<div class="a" style="left:209px;top:565.5px;width:0;height:0;border-left:4px solid transparent;border-bottom:4px solid #8a8a8a"></div>
<div class="a" style="left:717px;top:500px;width:3px;height:100px;background:#fff"></div>
<svg class="a" style="left:12px;top:576px" width="12" height="12" viewBox="0 0 12 12"><circle cx="6" cy="6" r="6" fill="#1c6aa3"/><rect x="5.1" y="5" width="1.8" height="4.6" fill="#fff"/><circle cx="6" cy="3.2" r="1" fill="#fff"/></svg>
<div class="a" style="left:28.5px;top:577px;font-size:8.6px;color:#444;line-height:11px">Showing rows 1-3 of 3.</div>
<div class="a" style="left:10px;top:593px;width:707px;height:9.5px;background:#f1f1f1"></div>
<div class="a" style="left:21.7px;top:593px;width:437px;height:9.5px;background:#c4c4c4"></div>
<div class="a" style="left:12.5px;top:595.5px;width:0;height:0;border-top:2.5px solid transparent;border-bottom:2.5px solid transparent;border-right:3px solid #bbb"></div>
<div class="a" style="left:710px;top:595px;width:0;height:0;border-top:3px solid transparent;border-bottom:3px solid transparent;border-left:3.5px solid #333"></div>
<svg class="a" style="left:629px;top:656px" width="12" height="17" viewBox="0 0 12 17"><path d="M1 1 L1 13.5 L4 10.8 L6.3 15.6 L8.3 14.7 L6.1 10 L10 10 Z" fill="#fff" stroke="#222" stroke-width="1"/></svg>
</div>
<div class="a" style="left:0;top:0;width:1477px;height:758px;overflow:hidden">
<svg class="a" style="left:1310px;top:490px" width="13" height="13" viewBox="0 0 13 13"><path d="M0.8 1 L12.2 1 L8 6 L7.6 12 L5.2 10.5 L5 6 Z" fill="none" stroke="#7a7a7a" stroke-width="1.1" stroke-linejoin="round"/></svg>
<svg class="a" style="left:1334.5px;top:490px" width="13" height="13" viewBox="0 0 13 13"><rect x="0.5" y="0.5" width="6" height="11" fill="#bdbdbd"/><path d="M4.5 5 L12.5 5 L9.5 8.5 L9.3 12.5 L7.7 11.5 L7.5 8.5 Z" fill="#fff" stroke="#a8a8a8" stroke-width="1"/></svg>
<svg class="a" style="left:1359px;top:490px" width="14" height="13" viewBox="0 0 14 13"><rect x="0.5" y="0.5" width="12" height="1.8" fill="#666"/><rect x="0.5" y="4" width="8" height="1.8" fill="#666"/><rect x="0.5" y="7.5" width="6" height="1.8" fill="#666"/><circle cx="9.8" cy="9.2" r="3.6" fill="#fff"/><circle cx="9.8" cy="9.2" r="3.1" fill="#555"/><path d="M9.8 7.4 V11 M8 9.2 H11.6" stroke="#fff" stroke-width="1.2"/></svg>
<svg class="a" style="left:1384px;top:490px" width="14" height="13" viewBox="0 0 14 13"><rect x="0.5" y="0.5" width="12" height="1.8" fill="#ddd"/><rect x="0.5" y="4" width="8" height="1.8" fill="#ddd"/><rect x="0.5" y="7.5" width="6" height="1.8" fill="#ddd"/><circle cx="9.8" cy="9" r="3.4" fill="#d8d8d8"/><path d="M7.8 9 H11.8" stroke="#fff" stroke-width="1.1"/></svg>
<svg class="a" style="left:1409px;top:490px" width="13" height="13" viewBox="0 0 13 13"><path d="M0.5 0.5 H10 L12.5 3 V12.5 H0.5 Z" fill="#d6d6d6"/><rect x="3" y="1.5" width="6" height="2.5" fill="#fff"/><circle cx="6.5" cy="8.5" r="1.8" fill="#fff"/></svg>
<svg class="a" style="left:1434.5px;top:490px" width="13" height="13" viewBox="0 0 13 13"><path d="M10.5 3 A5 5 0 1 0 11.3 8.5" fill="none" stroke="#8a8a8a" stroke-width="1.1"/><path d="M12 0.8 L12 4.6 L8.2 4.6 Z" fill="#8a8a8a"/></svg>
<svg class="a" style="left:1464px;top:490px" width="4" height="12" viewBox="0 0 4 12"><circle cx="2" cy="1.6" r="1.4" fill="#666"/><circle cx="2" cy="6" r="1.4" fill="#666"/><circle cx="2" cy="10.4" r="1.4" fill="#666"/></svg>
<div class="a" style="left:737px;top:509px;width:740px;height:19px;background:#f3f3f3;border-bottom:1px solid #e6e6e6"></div>
<div class="a" style="left:871px;top:527px;width:606px;height:1.5px;background:#cfcfcf"></div>
<div class="a" style="left:1281px;top:528px;width:86px;height:127px;background:#efefef"></div>
<div class="a" style="left:871px;top:598.4px;width:102.5px;height:14.3px;background:#f2f2f2"></div>
<div class="a" style="left:1367px;top:598.4px;width:110px;height:14.3px;background:#f2f2f2"></div>
<div class="a" style="left:756px;top:612.7px;width:115px;height:14px;background:#f0f0f0"></div>
<div class="a" style="left:973.5px;top:612.7px;width:307.5px;height:14px;background:#f2f2f2"></div>
<div class="a" style="left:756px;top:509px;width:1px;height:147px;background:#e9e9e9"></div>
<div class="a" style="left:870.5px;top:509px;width:1.2px;height:147px;background:#a9a9a9"></div>
<div class="a" style="left:973.5px;top:509px;width:1px;height:147px;background:#e9e9e9"></div>
<div class="a" style="left:1035.5px;top:509px;width:1px;height:147px;background:#e9e9e9"></div>
<div class="a" style="left:1110.7px;top:509px;width:1px;height:147px;background:#e9e9e9"></div>
<div class="a" style="left:1218px;top:509px;width:1px;height:147px;background:#e9e9e9"></div>
<div class="a" style="left:1281px;top:509px;width:1px;height:147px;background:#e9e9e9"></div>
<div class="a" style="left:1367px;top:509px;width:1px;height:147px;background:#e9e9e9"></div>
<div class="a" style="left:1429px;top:509px;width:1px;height:147px;background:#e9e9e9"></div>
<div class="a" style="left:737px;top:509px;width:19px;text-align:center;font-size:8.3px;color:#505050;line-height:19px">#</div>
<div class="a" style="left:781px;top:509px;font-size:8.3px;color:#505050;line-height:19px">NAME</div>
<div class="a" style="left:871px;top:509px;width:88.5px;text-align:right;font-size:8.3px;color:#505050;line-height:19px">LEVEL</div>
<div class="a" style="left:983.5px;top:509px;font-size:8.3px;color:#505050;line-height:19px">REASON</div>
<div class="a" style="left:1045.5px;top:509px;font-size:8.3px;color:#505050;line-height:19px">DESCRIPTI...</div>
<div class="a" style="left:1120.7px;top:509px;font-size:8.3px;color:#505050;line-height:19px">COMMISSION TARG...</div>
<div class="a" style="left:1228px;top:509px;font-size:8.3px;color:#505050;line-height:19px">BONUS %</div>
<div class="a" style="left:1281px;top:509px;width:86px;text-align:center;font-size:8.3px;color:#505050;line-height:19px">ALLOCATIONS &gt;</div>
<div class="a" style="left:1367px;top:509px;width:62px;text-align:center;font-size:8.3px;color:#505050;line-height:19px">JAN 2019</div>
<div class="a" style="left:1449px;top:509px;font-size:8.3px;color:#505050;line-height:19px">FEB 2019</div>
<div class="a" style="left:757px;top:516.5px;width:0;height:0;border-left:3.5px solid transparent;border-right:3.5px solid transparent;border-top:4px solid #999"></div>
<div class="a" style="left:737px;top:541.8px;width:740px;height:1px;background:#e6e6e6"></div>
<div class="a" style="left:737px;top:527.2px;width:19px;text-align:center;font-size:9px;color:#4a4a4a;line-height:14px;color:#555">1</div>
<div class="a" style="left:781.7px;top:528.2px;font-size:9px;color:#4a4a4a;line-height:14px">Dave Brasnick</div>
<div class="a" style="left:879.7px;top:528.2px;font-size:9px;color:#4a4a4a;line-height:14px">Sales - London</div>
<div class="a" style="left:1110.7px;top:528.2px;width:99px;text-align:right;font-size:9px;color:#4a4a4a;line-height:14px">45,000</div>
<div class="a" style="left:1228px;top:528.2px;font-size:9px;color:#4a4a4a;line-height:14px">None</div>
<div class="a" style="left:737px;top:555.9px;width:740px;height:1px;background:#e6e6e6"></div>
<div class="a" style="left:737px;top:541.3px;width:19px;text-align:center;font-size:9px;color:#4a4a4a;line-height:14px;color:#555">2</div>
<div class="a" style="left:781.7px;top:542.3px;font-size:9px;color:#4a4a4a;line-height:14px">New Hire</div>
<div class="a" style="left:879.7px;top:542.3px;font-size:9px;color:#4a4a4a;line-height:14px">Sales - London</div>
<div class="a" style="left:1110.7px;top:542.3px;width:99px;text-align:right;font-size:9px;color:#4a4a4a;line-height:14px">36,000</div>
<div class="a" style="left:1228px;top:542.3px;font-size:9px;color:#4a4a4a;line-height:14px">None</div>
<div class="a" style="left:737px;top:570.0px;width:740px;height:1px;background:#e6e6e6"></div>
<div class="a" style="left:737px;top:555.4px;width:19px;text-align:center;font-size:9px;color:#4a4a4a;line-height:14px;color:#555">3</div>
<div class="a" style="left:781.7px;top:556.4px;font-size:9px;color:#4a4a4a;line-height:14px">New Hire</div>
<div class="a" style="left:879.7px;top:556.4px;font-size:9px;color:#4a4a4a;line-height:14px">Sales - London</div>
<div class="a" style="left:1110.7px;top:556.4px;width:99px;text-align:right;font-size:9px;color:#4a4a4a;line-height:14px">45,000</div>
<div class="a" style="left:1228px;top:556.4px;font-size:9px;color:#4a4a4a;line-height:14px">None</div>
<div class="a" style="left:737px;top:584.1px;width:740px;height:1px;background:#e6e6e6"></div>
<div class="a" style="left:737px;top:569.5px;width:19px;text-align:center;font-size:9px;color:#4a4a4a;line-height:14px;color:#555">4</div>
<div class="a" style="left:781.7px;top:570.5px;font-size:9px;color:#4a4a4a;line-height:14px">Todd Massey</div>
<div class="a" style="left:879.7px;top:570.5px;font-size:9px;color:#4a4a4a;line-height:14px">Sales - Sydney</div>
<div class="a" style="left:1110.7px;top:570.5px;width:99px;text-align:right;font-size:9px;color:#4a4a4a;line-height:14px">35,000</div>
<div class="a" style="left:1228px;top:570.5px;font-size:9px;color:#4a4a4a;line-height:14px">None</div>
<div class="a" style="left:737px;top:598.2px;width:740px;height:1px;background:#e6e6e6"></div>
<div class="a" style="left:737px;top:583.6px;width:19px;text-align:center;font-size:9px;color:#4a4a4a;line-height:14px;color:#555">5</div>
<div class="a" style="left:781.7px;top:584.6px;font-size:9px;color:#4a4a4a;line-height:14px">Gord Schmidt</div>
<div class="a" style="left:879.7px;top:584.6px;font-size:9px;color:#4a4a4a;line-height:14px">Sales - Brisbane</div>
<div class="a" style="left:1110.7px;top:584.6px;width:99px;text-align:right;font-size:9px;color:#4a4a4a;line-height:14px">45,000</div>
<div class="a" style="left:1228px;top:584.6px;font-size:9px;color:#4a4a4a;line-height:14px">None</div>
<div class="a" style="left:737px;top:612.3px;width:740px;height:1px;background:#e6e6e6"></div>
<div class="a" style="left:737px;top:597.7px;width:19px;text-align:center;font-size:9px;color:#4a4a4a;line-height:14px;color:#555">6</div>
<div class="a" style="left:781.7px;top:598.7px;font-size:9px;color:#4a4a4a;line-height:14px">Fred Nelson</div>
<div class="a" style="left:879.7px;top:598.7px;font-size:9px;color:#4a4a4a;line-height:14px">Executive</div>
<div class="a" style="left:1110.7px;top:598.7px;width:99px;text-align:right;font-size:9px;color:#4a4a4a;line-height:14px">0</div>
<div class="a" style="left:1228px;top:598.7px;font-size:9px;color:#4a4a4a;line-height:14px">15%</div>
<div class="a" style="left:737px;top:626.4px;width:740px;height:1px;background:#e6e6e6"></div>
<div class="a" style="left:737px;top:611.8px;width:19px;text-align:center;font-size:9px;color:#4a4a4a;line-height:14px;color:#555">7</div>
<div class="a" style="left:797px;top:612.8px;font-size:9px;color:#4a4a4a;line-height:14px">Fred Nelson</div>
<div class="a" style="left:879.7px;top:612.8px;font-size:9px;color:#4a4a4a;line-height:14px">Executive</div>
<div class="a" style="left:1110.7px;top:612.8px;width:99px;text-align:right;font-size:9px;color:#4a4a4a;line-height:14px">0</div>
<div class="a" style="left:1228px;top:612.8px;font-size:9px;color:#4a4a4a;line-height:14px">15%</div>
<div class="a" style="left:737px;top:640.5px;width:740px;height:1px;background:#e6e6e6"></div>
<div class="a" style="left:737px;top:625.9px;width:19px;text-align:center;font-size:9px;color:#4a4a4a;line-height:14px;color:#555">8</div>
<div class="a" style="left:781.7px;top:626.9px;font-size:9px;color:#4a4a4a;line-height:14px">Ann A</div>
<div class="a" style="left:879.7px;top:626.9px;font-size:9px;color:#4a4a4a;line-height:14px">Production</div>
<div class="a" style="left:1110.7px;top:626.9px;width:99px;text-align:right;font-size:9px;color:#4a4a4a;line-height:14px">0</div>
<div class="a" style="left:1228px;top:626.9px;font-size:9px;color:#4a4a4a;line-height:14px">None</div>
<div class="a" style="left:737px;top:654.6px;width:740px;height:1px;background:#e6e6e6"></div>
<div class="a" style="left:737px;top:640.0px;width:19px;text-align:center;font-size:9px;color:#4a4a4a;line-height:14px;color:#555">9</div>
<div class="a" style="left:781.7px;top:641.0px;font-size:9px;color:#4a4a4a;line-height:14px">Riya G</div>
<div class="a" style="left:879.7px;top:641.0px;font-size:9px;color:#4a4a4a;line-height:14px">Production</div>
<div class="a" style="left:1110.7px;top:641.0px;width:99px;text-align:right;font-size:9px;color:#4a4a4a;line-height:14px">0</div>
<div class="a" style="left:1228px;top:641.0px;font-size:9px;color:#4a4a4a;line-height:14px">None</div>
<div class="a" style="left:766px;top:603.5px;width:0;height:0;border-left:3.5px solid transparent;border-right:3.5px solid transparent;border-top:4px solid #999"></div>
<div class="a" style="left:1477px;top:500px;width:1.5px;height:200px;background:#fff"></div>
<svg class="a" style="left:741px;top:660.5px" width="12" height="12" viewBox="0 0 12 12"><circle cx="6" cy="6" r="6" fill="#1c6aa3"/><rect x="5.1" y="5" width="1.8" height="4.6" fill="#fff"/><circle cx="6" cy="3.2" r="1" fill="#fff"/></svg>
<div class="a" style="left:756.8px;top:661.5px;font-size:8.6px;color:#444;line-height:11px">Showing rows 1-8 of 8.</div>
<div class="a" style="left:737px;top:676.8px;width:740px;height:10.6px;background:#f1f1f1"></div>
<div class="a" style="left:870.5px;top:675px;width:1.2px;height:14px;background:#a9a9a9"></div>
<div class="a" style="left:1050px;top:676.8px;width:82px;height:10.6px;background:#c4c4c4"></div>
<div class="a" style="left:741.5px;top:679.5px;width:0;height:0;border-top:2.5px solid transparent;border-bottom:2.5px solid transparent;border-right:3px solid #bbb"></div>
<div class="a" style="left:863px;top:679.5px;width:0;height:0;border-top:2.5px solid transparent;border-bottom:2.5px solid transparent;border-left:3px solid #bbb"></div>
<div class="a" style="left:876.5px;top:679px;width:0;height:0;border-top:3px solid transparent;border-bottom:3px solid transparent;border-right:3.5px solid #333"></div>
<div class="a" style="left:1468.5px;top:679px;width:0;height:0;border-top:3px solid transparent;border-bottom:3px solid transparent;border-left:3.5px solid #333"></div>
</div></div><!--/tables-->

<!-- footer -->
<div class="a" style="left:0;top:737px;width:1500px;height:21px;background:#fdfdfd;border-top:1px solid #ebebeb"></div>
<div class="a" style="left:12px;top:742.5px;font-size:9.1px;color:#5e5e5e">© 2020 Workday, Inc. All rights reserved. Proprietary and Confidential.</div>
<div class="a" style="left:304px;top:742px;width:1px;height:11px;background:#ddd"></div>
<div class="a" style="left:317px;top:742.5px;font-size:9px;color:#5a7fb0">Privacy Policy</div>
<svg class="a" style="left:0;top:750px" width="1500" height="8" viewBox="0 750 1500 8"><rect x="0" y="756.7" width="1500" height="1.3" fill="#111"/></svg>
</body></html>
